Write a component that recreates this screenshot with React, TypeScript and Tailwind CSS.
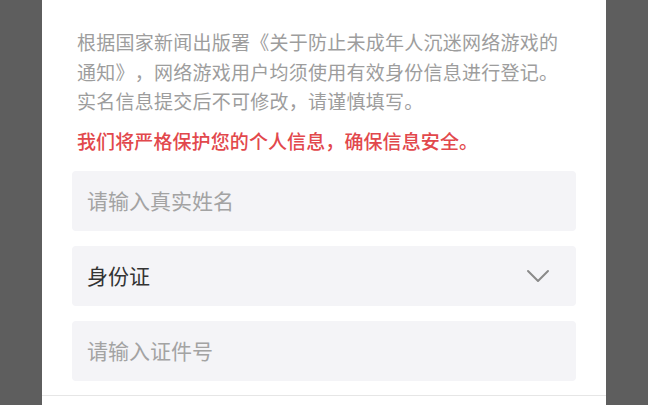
import React from "react";

const font = { fontFamily: '"Noto Sans CJK SC", "Noto Sans", sans-serif' };

export default function App() {
  return (
    <div className="flex h-[405px] w-[648px] overflow-hidden bg-[#5e5e5e] px-[42px] [text-spacing-trim:space-all]" style={font}>
      <div className="flex flex-1 flex-col bg-white">
        <div className="pl-[35px] pt-[27px] text-[19px] leading-[29.5px] tracking-[0.25px] text-[#9d9d9d]">
          <div className="whitespace-nowrap">根据国家新闻出版署《关于防止未成年人沉迷网络游戏的</div>
          <div className="whitespace-nowrap">通知》，网络游戏用户均须使用有效身份信息进行登记。</div>
          <div className="whitespace-nowrap">实名信息提交后不可修改，请谨慎填写。</div>
        </div>
        <div className="mt-[10px] whitespace-nowrap pl-[35px] text-[19px] font-medium leading-[29.5px] tracking-[0.1px] text-[#e2484c]">
          我们将严格保护您的个人信息，确保信息安全。
        </div>
        <div className="mt-[16px] flex flex-col gap-[15px] px-[30px]">
          <div className="flex h-[60px] items-center rounded-[4px] bg-[#f4f4f7] pl-[15px] text-[21px] text-[#a3a3a3]">
            请输入真实姓名
          </div>
          <div className="flex h-[60px] items-center justify-between rounded-[4px] bg-[#f4f4f7] pl-[15px] pr-[26px] text-[21px] text-[#333333]">
            <span>身份证</span>
            <svg width="24" height="14" viewBox="0 0 24 14" fill="none">
              <path d="M2 2 L12 12 L22 2" stroke="#8a8a8a" strokeWidth="2" strokeLinecap="round" strokeLinejoin="round" />
            </svg>
          </div>
          <div className="flex h-[60px] items-center rounded-[4px] bg-[#f4f4f7] pl-[15px] text-[21px] text-[#a3a3a3]">
            请输入证件号
          </div>
        </div>
        <div className="mt-[14px] border-t border-[#e6e6e6]" />
      </div>
    </div>
  );
}
